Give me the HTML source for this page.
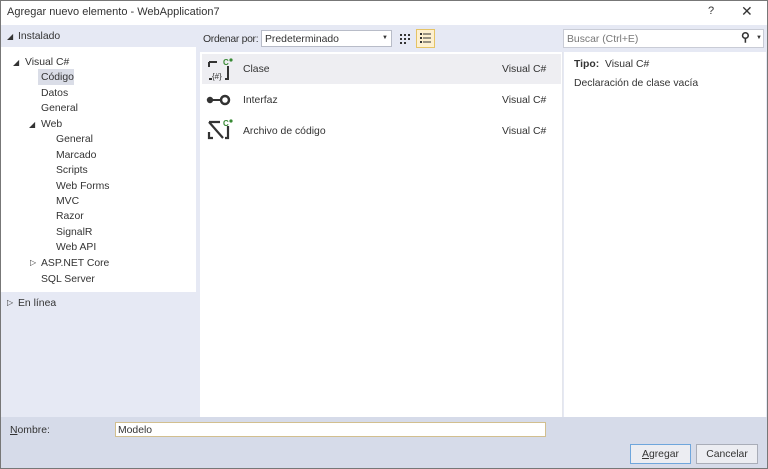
<!DOCTYPE html>
<html><head><style>
*{margin:0;padding:0;box-sizing:border-box}
body{width:768px;height:469px;position:relative;overflow:hidden;font-family:"Liberation Sans",sans-serif;font-size:10.4px;color:#333;background:#e6e9f4}
.a{position:absolute;white-space:nowrap}
.t{margin-top:1px}
</style></head><body>
<div class="a" style="left:0;top:0;width:768px;height:25px;background:#fff"></div>
<div class="a" style="left:7px;top:6px;font-size:11px">Agregar nuevo elemento - WebApplication7</div>
<div class="a" style="left:708px;top:5px;font-size:11px">?</div>
<div class="a" style="left:741px;top:3px;font-size:14px;font-weight:300">✕</div>

<div class="a" style="left:7px;top:32px;font-size:8px">◢</div>
<div class="a" style="left:18px;top:31px">Instalado</div>
<div class="a" style="left:0;top:47px;width:196px;height:245px;background:#fff"></div>
<div class="a" style="left:13px;top:58px;font-size:8px">◢</div>
<div class="a" style="left:25px;top:57px">Visual C#</div>
<div class="a" style="left:38px;top:69px;width:36px;height:16px;background:#dadde7"></div>
<div class="a" style="left:41px;top:72px">Código</div>
<div class="a" style="left:41px;top:88px">Datos</div>
<div class="a" style="left:41px;top:103px">General</div>
<div class="a" style="left:29px;top:120px;font-size:8px">◢</div>
<div class="a" style="left:41px;top:119px">Web</div>
<div class="a" style="left:56px;top:134px">General</div>
<div class="a" style="left:56px;top:150px">Marcado</div>
<div class="a" style="left:56px;top:165px">Scripts</div>
<div class="a" style="left:56px;top:181px">Web Forms</div>
<div class="a" style="left:56px;top:196px">MVC</div>
<div class="a" style="left:56px;top:211px">Razor</div>
<div class="a" style="left:56px;top:227px">SignalR</div>
<div class="a" style="left:56px;top:242px">Web API</div>
<div class="a" style="left:30px;top:258px;font-size:8px">▷</div>
<div class="a" style="left:41px;top:258px">ASP.NET Core</div>
<div class="a" style="left:41px;top:274px">SQL Server</div>
<div class="a" style="left:7px;top:298px;font-size:8px">▷</div>
<div class="a" style="left:18px;top:298px">En línea</div>

<div class="a" style="left:203px;top:34px;letter-spacing:-0.3px">Ordenar por:</div>
<div class="a" style="left:261px;top:30px;width:131px;height:17px;background:#fff;border:1px solid #b8bcc8"></div>
<div class="a" style="left:265px;top:34px">Predeterminado</div>
<div class="a" style="left:382px;top:35px;font-size:6px">▼</div>
<svg class="a" style="left:398px;top:32px" width="14" height="14"><g fill="#333"><rect x="2" y="2" width="2" height="2"/><rect x="6" y="2" width="2" height="2"/><rect x="10" y="2" width="2" height="2"/><rect x="2" y="6" width="2" height="2"/><rect x="6" y="6" width="2" height="2"/><rect x="10" y="6" width="2" height="2"/><rect x="2" y="10" width="2" height="2"/><rect x="6" y="10" width="2" height="2"/></g></svg>
<div class="a" style="left:416px;top:29px;width:19px;height:19px;background:#fdf0d0;border:1px solid #e5c365"></div>
<svg class="a" style="left:418px;top:31px" width="15" height="15"><g fill="#333"><rect x="2" y="2" width="2" height="2"/><rect x="5" y="2.5" width="8" height="1"/><rect x="2" y="6" width="2" height="2"/><rect x="5" y="6.5" width="8" height="1"/><rect x="2" y="10" width="2" height="2"/><rect x="5" y="10.5" width="8" height="1"/></g></svg>

<div class="a" style="left:200px;top:52px;width:363px;height:365px;background:#fff;border-right:1px solid #e4e6ec"></div>
<div class="a" style="left:202px;top:54px;width:359px;height:30px;background:#eeeef2"></div>
<svg class="a" style="left:206px;top:57px" width="28" height="26"><path d="M3 5h8M3 5v5M22 9v13h-3M3 22h3" stroke="#333" stroke-width="2" fill="none"/><text x="17" y="8" font-size="8" font-weight="bold" fill="#388a34" font-family="Liberation Sans">C</text><circle cx="25" cy="3" r="1.6" fill="#388a34"/><text x="6" y="22" font-size="8" fill="#333" font-family="Liberation Sans">{#}</text></svg>
<div class="a" style="left:243px;top:64px">Clase</div>
<div class="a" style="left:502px;top:64px">Visual C#</div>
<svg class="a" style="left:206px;top:92px" width="28" height="16"><circle cx="4" cy="8" r="3.2" fill="#333"/><rect x="6" y="7" width="8" height="2" fill="#333"/><circle cx="19" cy="8" r="4" stroke="#333" stroke-width="2.5" fill="none"/></svg>
<div class="a" style="left:243px;top:95px">Interfaz</div>
<div class="a" style="left:502px;top:95px">Visual C#</div>
<svg class="a" style="left:206px;top:118px" width="28" height="24"><path d="M3 4h11M3 4l14 16M3 14v6h4M22 8v12h-3" stroke="#333" stroke-width="2.2" fill="none"/><text x="17" y="8" font-size="8" font-weight="bold" fill="#388a34" font-family="Liberation Sans">C</text><circle cx="25" cy="3" r="1.6" fill="#388a34"/></svg>
<div class="a" style="left:243px;top:126px">Archivo de código</div>
<div class="a" style="left:502px;top:126px">Visual C#</div>

<div class="a" style="left:563px;top:29px;width:201px;height:19px;background:#fff;border:1px solid #c9ccd6"></div>
<div class="a" style="left:567px;top:34px;color:#777">Buscar (Ctrl+E)</div>
<div class="a" style="left:741px;top:30px;font-size:12px;font-weight:bold">⚲</div>
<div class="a" style="left:756px;top:35px;font-size:6px">▼</div>
<div class="a" style="left:564px;top:52px;width:202px;height:365px;background:#fff"></div>
<div class="a" style="left:574px;top:59px"><b>Tipo:</b>&nbsp; Visual C#</div>
<div class="a" style="left:574px;top:78px">Declaración de clase vacía</div>

<div class="a" style="left:0;top:417px;width:768px;height:52px;background:#d6dbe9"></div>
<div class="a" style="left:10px;top:425px"><u>N</u>ombre:</div>
<div class="a" style="left:115px;top:422px;width:431px;height:15px;background:#fff;border:1px solid #d2bf8f"></div>
<div class="a" style="left:118px;top:425px">Modelo</div>
<div class="a" style="left:630px;top:444px;width:61px;height:20px;background:#ecedf2;border:1px solid #6fa6dc;text-align:center;padding-top:4px"><u>A</u>gregar</div>
<div class="a" style="left:696px;top:444px;width:62px;height:20px;background:#ecedf2;border:1px solid #a9adb8;text-align:center;padding-top:4px">Cancelar</div>
<div class="a" style="left:0;top:0;width:768px;height:469px;border:1px solid #777"></div>
</body></html>
